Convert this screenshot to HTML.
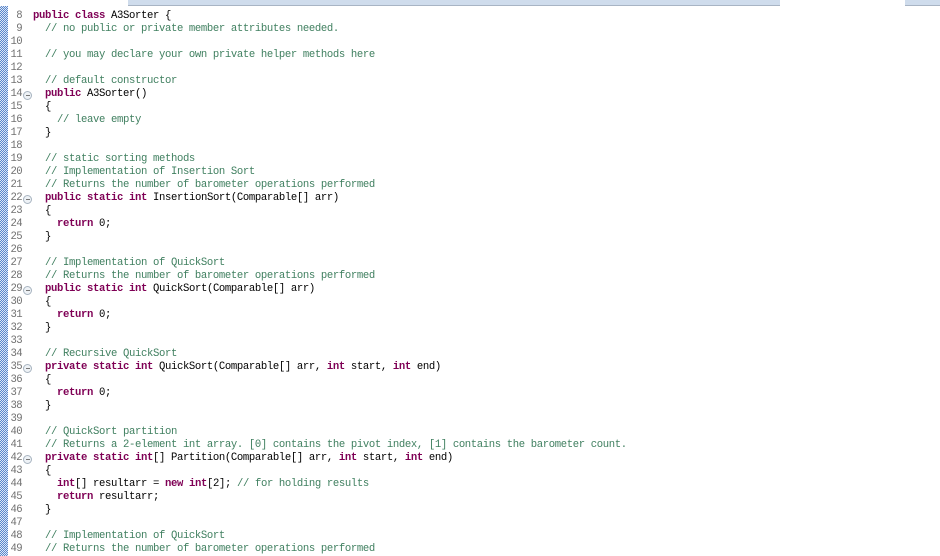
<!DOCTYPE html>
<html><head><meta charset="utf-8"><style>
html,body{margin:0;padding:0;width:940px;height:556px;overflow:hidden;background:#fff}
.tabs{position:absolute;left:0;top:0;width:940px;height:5px;background:#cfdcec;border-bottom:1px solid #a8b4c4}
.tw{position:absolute;top:0;height:6px;background:#fff}
.strip{position:absolute;left:0;top:6px;width:8px;height:550px;
background-image:linear-gradient(45deg,#5a86cc 25%,transparent 25%,transparent 75%,#5a86cc 75%),linear-gradient(45deg,#5a86cc 25%,transparent 25%,transparent 75%,#5a86cc 75%);
background-size:2px 2px;background-position:0 0,1px 1px;background-color:#dde8f6}
.l{position:absolute;left:0;height:13px;line-height:13px;font-family:"Liberation Mono",monospace;font-size:10.6px;letter-spacing:-0.36px;white-space:pre;color:#000}
.n{position:absolute;width:22px;text-align:right;left:0;color:#707070;letter-spacing:-0.6px}
.c{position:absolute;left:33px}
.k{color:#7f0055;font-weight:bold}
.m{color:#3f7f5f}
.f{position:absolute;left:23px;top:3px;width:7px;height:7px;border-radius:50%;border:1px solid #a8b4c0;background:#eef2f6}
.f:after{content:"";position:absolute;left:1.5px;top:3px;width:4px;height:1px;background:#777}
</style></head><body>
<div class="tabs"></div>
<div class="tw" style="left:0;width:128px"></div>
<div class="tw" style="left:780px;width:125px"></div>
<div class="strip"></div>
<div class="l" style="top:10px"><span class="n">8</span><span class="c"><span class="k">public class</span> A3Sorter {</span></div>
<div class="l" style="top:23px"><span class="n">9</span><span class="c">  <span class="m">// no public or private member attributes needed.</span></span></div>
<div class="l" style="top:36px"><span class="n">10</span></div>
<div class="l" style="top:49px"><span class="n">11</span><span class="c">  <span class="m">// you may declare your own private helper methods here</span></span></div>
<div class="l" style="top:62px"><span class="n">12</span></div>
<div class="l" style="top:75px"><span class="n">13</span><span class="c">  <span class="m">// default constructor</span></span></div>
<div class="l" style="top:88px"><span class="n">14</span><span class="f"></span><span class="c">  <span class="k">public</span> A3Sorter()</span></div>
<div class="l" style="top:101px"><span class="n">15</span><span class="c">  {</span></div>
<div class="l" style="top:114px"><span class="n">16</span><span class="c">    <span class="m">// leave empty</span></span></div>
<div class="l" style="top:127px"><span class="n">17</span><span class="c">  }</span></div>
<div class="l" style="top:140px"><span class="n">18</span></div>
<div class="l" style="top:153px"><span class="n">19</span><span class="c">  <span class="m">// static sorting methods</span></span></div>
<div class="l" style="top:166px"><span class="n">20</span><span class="c">  <span class="m">// Implementation of Insertion Sort</span></span></div>
<div class="l" style="top:179px"><span class="n">21</span><span class="c">  <span class="m">// Returns the number of barometer operations performed</span></span></div>
<div class="l" style="top:192px"><span class="n">22</span><span class="f"></span><span class="c">  <span class="k">public static int</span> InsertionSort(Comparable[] arr)</span></div>
<div class="l" style="top:205px"><span class="n">23</span><span class="c">  {</span></div>
<div class="l" style="top:218px"><span class="n">24</span><span class="c">    <span class="k">return</span> 0;</span></div>
<div class="l" style="top:231px"><span class="n">25</span><span class="c">  }</span></div>
<div class="l" style="top:244px"><span class="n">26</span></div>
<div class="l" style="top:257px"><span class="n">27</span><span class="c">  <span class="m">// Implementation of QuickSort</span></span></div>
<div class="l" style="top:270px"><span class="n">28</span><span class="c">  <span class="m">// Returns the number of barometer operations performed</span></span></div>
<div class="l" style="top:283px"><span class="n">29</span><span class="f"></span><span class="c">  <span class="k">public static int</span> QuickSort(Comparable[] arr)</span></div>
<div class="l" style="top:296px"><span class="n">30</span><span class="c">  {</span></div>
<div class="l" style="top:309px"><span class="n">31</span><span class="c">    <span class="k">return</span> 0;</span></div>
<div class="l" style="top:322px"><span class="n">32</span><span class="c">  }</span></div>
<div class="l" style="top:335px"><span class="n">33</span></div>
<div class="l" style="top:348px"><span class="n">34</span><span class="c">  <span class="m">// Recursive QuickSort</span></span></div>
<div class="l" style="top:361px"><span class="n">35</span><span class="f"></span><span class="c">  <span class="k">private static int</span> QuickSort(Comparable[] arr, <span class="k">int</span> start, <span class="k">int</span> end)</span></div>
<div class="l" style="top:374px"><span class="n">36</span><span class="c">  {</span></div>
<div class="l" style="top:387px"><span class="n">37</span><span class="c">    <span class="k">return</span> 0;</span></div>
<div class="l" style="top:400px"><span class="n">38</span><span class="c">  }</span></div>
<div class="l" style="top:413px"><span class="n">39</span></div>
<div class="l" style="top:426px"><span class="n">40</span><span class="c">  <span class="m">// QuickSort partition</span></span></div>
<div class="l" style="top:439px"><span class="n">41</span><span class="c">  <span class="m">// Returns a 2-element int array. [0] contains the pivot index, [1] contains the barometer count.</span></span></div>
<div class="l" style="top:452px"><span class="n">42</span><span class="f"></span><span class="c">  <span class="k">private static int</span>[] Partition(Comparable[] arr, <span class="k">int</span> start, <span class="k">int</span> end)</span></div>
<div class="l" style="top:465px"><span class="n">43</span><span class="c">  {</span></div>
<div class="l" style="top:478px"><span class="n">44</span><span class="c">    <span class="k">int</span>[] resultarr = <span class="k">new int</span>[2]; <span class="m">// for holding results</span></span></div>
<div class="l" style="top:491px"><span class="n">45</span><span class="c">    <span class="k">return</span> resultarr;</span></div>
<div class="l" style="top:504px"><span class="n">46</span><span class="c">  }</span></div>
<div class="l" style="top:517px"><span class="n">47</span></div>
<div class="l" style="top:530px"><span class="n">48</span><span class="c">  <span class="m">// Implementation of QuickSort</span></span></div>
<div class="l" style="top:543px"><span class="n">49</span><span class="c">  <span class="m">// Returns the number of barometer operations performed</span></span></div>
</body></html>
